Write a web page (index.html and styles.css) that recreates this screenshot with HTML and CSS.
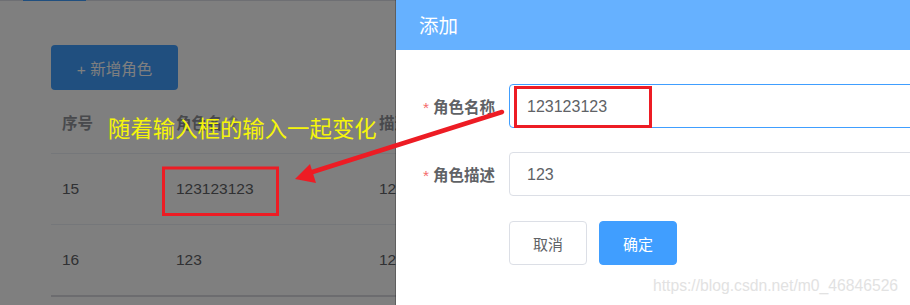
FILE: index.html
```html
<!DOCTYPE html>
<html lang="zh-CN">
<head>
<meta charset="utf-8">
<title>添加角色</title>
<link rel="stylesheet" href="styles.css">
</head>
<body>
<div class="page">
  <div class="tabs"><div class="tab-active"></div></div>
  <div class="content">
    <button class="btn-add">+ 新增角色</button>
    <div class="table">
      <div class="row head">
        <div class="c1">序号</div>
        <div class="c2">角色名<span class="caret"><span class="up"></span><span class="down"></span></span></div>
        <div class="c3">描述</div>
      </div>
      <div class="row">
        <div class="c1">15</div>
        <div class="c2">123123123</div>
        <div class="c3">123</div>
      </div>
      <div class="row last">
        <div class="c1">16</div>
        <div class="c2">123</div>
        <div class="c3">123</div>
      </div>
    </div>
  </div>
  <div class="mask"></div>
  <div class="dialog">
    <div class="dialog-header">添加</div>
    <div class="dialog-body">
      <div class="form-item">
        <label class="label"><span class="req">*</span>角色名称</label>
        <div class="input focus">123123123</div>
      </div>
      <div class="form-item">
        <label class="label"><span class="req">*</span>角色描述</label>
        <div class="input">123</div>
      </div>
      <div class="actions">
        <button class="btn">取消</button>
        <button class="btn primary">确定</button>
      </div>
    </div>
  </div>
  <div class="note">随着输入框的输入一起变化</div>
  <svg class="marks" width="910" height="305" viewBox="0 0 910 305">
    <rect x="163.5" y="168" width="114" height="46.5" fill="none" stroke="#ed1c24" stroke-width="3"/>
    <rect x="515.5" y="87.5" width="135" height="39" fill="none" stroke="#ed1c24" stroke-width="3"/>
    <line x1="502" y1="112" x2="306" y2="174" stroke="#ed1c24" stroke-width="4.5" stroke-linecap="round"/>
    <polygon points="295,179 310,164 316,183" fill="#ed1c24"/>
  </svg>
  <div class="watermark">https://blog.csdn.net/m0_46846526</div>
</div>
</body>
</html>
```
FILE: styles.css
```css
html, body {
  margin: 0;
  padding: 0;
}
body {
  font-family: "Liberation Sans", "Noto Sans CJK SC", sans-serif;
  background: #fff;
}
.page {
  position: relative;
  width: 910px;
  height: 305px;
  overflow: hidden;
  background: #fff;
}
.tabs {
  height: 1px;
  background: #dcdfe6;
}
.tab-active {
  margin-left: 23px;
  width: 63px;
  height: 1px;
  background: #409eff;
}
.content {
  padding-left: 51px;
}
.btn-add {
  display: block;
  margin: 44px 0 0 0;
  width: 127px;
  height: 45px;
  border: none;
  border-radius: 4px;
  background: #409eff;
  color: #fff;
  font-family: "Liberation Sans", "Noto Sans CJK SC", sans-serif;
  font-size: 15.5px;
  padding: 0;
}
.table {
  margin-top: 5px;
  width: 900px;
  border-bottom: 2px solid #d8d9de;
}
.row {
  display: flex;
  align-items: center;
  height: 71px;
  box-sizing: border-box;
  border-bottom: 1px solid #ebeef5;
  font-size: 15.5px;
  color: #606266;
}
.row.last {
  border-bottom: none;
  height: 70px;
}
.row.head {
  height: 59px;
  padding-bottom: 5px;
  color: #909399;
  font-weight: bold;
}
.c1 {
  width: 125px;
  padding-left: 11px;
  box-sizing: border-box;
}
.c2 {
  width: 203px;
  display: flex;
  align-items: center;
}
.c3 {
  flex: 1;
}
.caret {
  display: inline-flex;
  flex-direction: column;
  gap: 3px;
  margin-left: 5px;
}
.caret .up {
  width: 0;
  height: 0;
  border-left: 5px solid transparent;
  border-right: 5px solid transparent;
  border-bottom: 5px solid #c0c4cc;
}
.caret .down {
  width: 0;
  height: 0;
  border-left: 5px solid transparent;
  border-right: 5px solid transparent;
  border-top: 5px solid #c0c4cc;
}
.mask {
  position: absolute;
  inset: 0;
  background: rgba(0, 0, 0, 0.5);
}
.dialog {
  position: absolute;
  left: 396px;
  top: 0;
  width: 600px;
  height: 320px;
  background: #fff;
  box-shadow: -1px 0 0 rgba(0, 0, 0, 0.25);
}
.dialog-header {
  height: 50px;
  line-height: 50px;
  background: #66b1ff;
  color: #fff;
  padding-left: 23px;
  font-size: 19.5px;
  font-family: "Noto Sans CJK SC", sans-serif;
}
.dialog-body {
  padding-top: 34px;
  display: flex;
  flex-direction: column;
  gap: 24px;
}
.form-item {
  display: flex;
  align-items: center;
}
.label {
  width: 113px;
  box-sizing: border-box;
  padding-right: 14px;
  text-align: right;
  font-size: 15.5px;
  font-weight: bold;
  color: #606266;
  font-family: "Noto Sans CJK SC", sans-serif;
}
.req {
  color: #f56c6c;
  font-weight: normal;
  margin-right: 4px;
  font-family: "Liberation Sans", sans-serif;
}
.input {
  width: 440px;
  height: 44px;
  box-sizing: border-box;
  border: 1px solid #dcdfe6;
  border-radius: 4px;
  padding: 2px 0 0 17px;
  line-height: 40px;
  font-size: 16px;
  color: #606266;
}
.input.focus {
  border-color: #409eff;
}
.actions {
  margin-top: 1px;
  padding-left: 113px;
  display: flex;
  gap: 12px;
}
.btn {
  width: 78px;
  height: 44px;
  box-sizing: border-box;
  border: 1px solid #dcdfe6;
  border-radius: 4px;
  background: #fff;
  color: #606266;
  font-size: 15px;
  font-family: "Noto Sans CJK SC", sans-serif;
  padding: 0;
}
.btn.primary {
  background: #409eff;
  border-color: #409eff;
  color: #fff;
}
.note {
  position: absolute;
  left: 108px;
  top: 113px;
  font-size: 22.4px;
  line-height: 28px;
  color: #f5f50a;
  font-family: "Noto Sans CJK SC", sans-serif;
  white-space: nowrap;
}
.marks {
  position: absolute;
  left: 0;
  top: 0;
  pointer-events: none;
}
.watermark {
  position: absolute;
  left: 653px;
  top: 277px;
  font-size: 15.7px;
  color: #e2e2e2;
  white-space: nowrap;
}
```
